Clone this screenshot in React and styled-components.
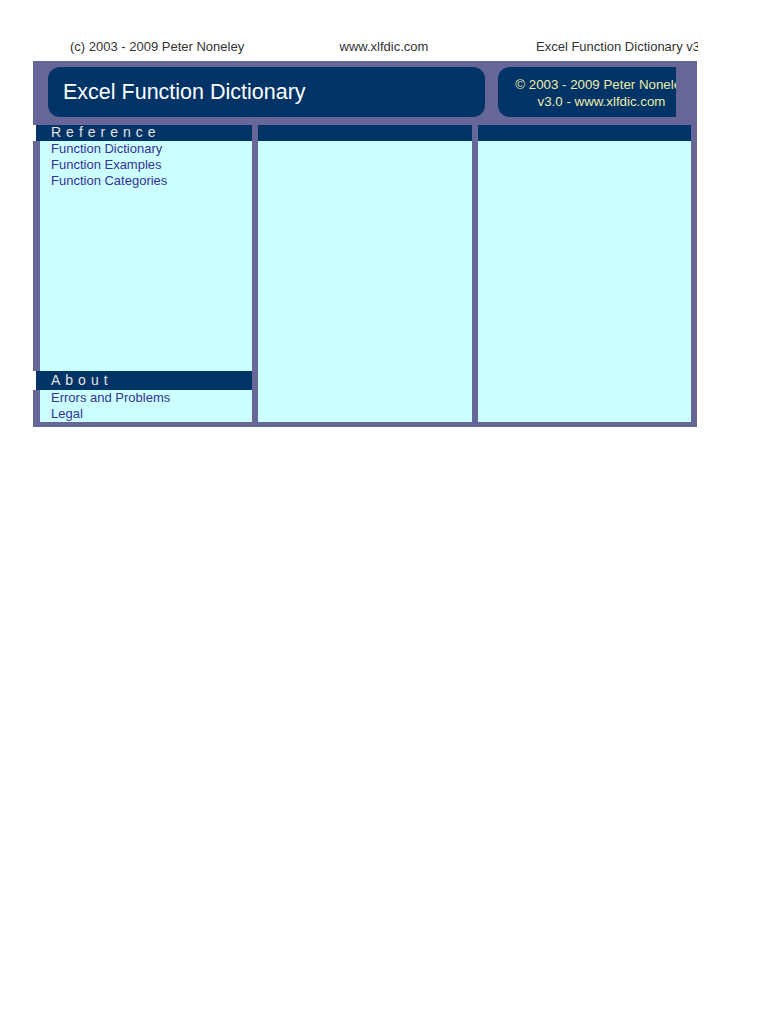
import React from "react";
import styled, { createGlobalStyle } from "styled-components";

const GlobalStyle = createGlobalStyle`
  body {
    margin: 0;
    background: #ffffff;
    font-family: "Liberation Sans", Arial, sans-serif;
  }
`;

const Page = styled.div`
  width: 768px;
`;

const TopLine = styled.div`
  display: flex;
  align-items: flex-end;
  height: 61px;
  margin-left: 33px;
  width: 665px;
  padding-bottom: 7px;
  box-sizing: border-box;
  font-size: 13px;
  line-height: 15px;
  color: #333333;
  white-space: nowrap;
`;

const TopCell = styled.div`
  width: ${(p) => p.$width}px;
  padding-left: ${(p) => p.$pad || 0}px;
  text-align: ${(p) => p.$align || "left"};
  overflow: hidden;
  box-sizing: border-box;
`;

const Sheet = styled.div`
  margin-left: 33px;
  width: 664px;
  background: #666699;
  padding-top: 6px;
`;

const HeaderRow = styled.div`
  display: flex;
  gap: 13px;
  height: 50px;
  padding-left: 15px;
  margin-bottom: 8px;
`;

const TitleBox = styled.div`
  width: 437px;
  box-sizing: border-box;
  background: #003366;
  border-radius: 12px;
  display: flex;
  align-items: center;
  padding-left: 15px;
  color: #ffffff;
  font-size: 21.5px;
`;

const InfoBox = styled.div`
  width: 178px;
  background: #003366;
  border-radius: 12px 0 0 12px;
  overflow: hidden;
`;

const InfoText = styled.div`
  width: 207px;
  padding-top: 9px;
  text-align: center;
  white-space: nowrap;
  color: #eeeeaa;
  font-size: 13.3px;
  line-height: 17px;
`;

const Body = styled.div`
  display: grid;
  grid-template-columns: 212px 214px 213px;
  column-gap: 6px;
  padding: 0 6px 5px 7px;
`;

const Column = styled.div`
  display: flex;
  flex-direction: column;
  height: 297px;
  background: #ccffff;
`;

const SectionBar = styled.div`
  height: ${(p) => (p.$tall ? 19 : 16)}px;
  line-height: ${(p) => (p.$tall ? 19 : 14)}px;
  background: #003366;
  color: #e4e4e4;
  font-size: 14px;
  letter-spacing: 5px;
  padding-left: 11px;
  margin-left: ${(p) => (p.$bleed ? -7 : 0)}px;
  border-left: ${(p) => (p.$bleed ? "3px solid #ffffff" : "none")};
  ${(p) => p.$bleed && "padding-left: 15px;"}
  white-space: nowrap;
`;

const LinkItem = styled.div`
  height: 16px;
  line-height: 16px;
  padding-left: 11px;
  font-size: 13px;
  color: #333399;
  white-space: nowrap;
`;

const Spacer = styled.div`
  flex: 1;
`;

export default function App() {
  return (
    <Page>
      <GlobalStyle />
      <TopLine>
        <TopCell $width={245} $pad={37}>(c) 2003 - 2009 Peter Noneley</TopCell>
        <TopCell $width={212} $align="center">www.xlfdic.com</TopCell>
        <TopCell $width={208} $pad={46}>Excel Function Dictionary v3.0</TopCell>
      </TopLine>
      <Sheet>
        <HeaderRow>
          <TitleBox>Excel Function Dictionary</TitleBox>
          <InfoBox>
            <InfoText>
              © 2003 - 2009 Peter Noneley
              <br />
              v3.0 - www.xlfdic.com
            </InfoText>
          </InfoBox>
        </HeaderRow>
        <Body>
          <Column>
            <SectionBar $bleed>Reference</SectionBar>
            <LinkItem>Function Dictionary</LinkItem>
            <LinkItem>Function Examples</LinkItem>
            <LinkItem>Function Categories</LinkItem>
            <Spacer />
            <SectionBar $bleed $tall>About</SectionBar>
            <LinkItem>Errors and Problems</LinkItem>
            <LinkItem>Legal</LinkItem>
          </Column>
          <Column>
            <SectionBar />
          </Column>
          <Column>
            <SectionBar />
          </Column>
        </Body>
      </Sheet>
    </Page>
  );
}
